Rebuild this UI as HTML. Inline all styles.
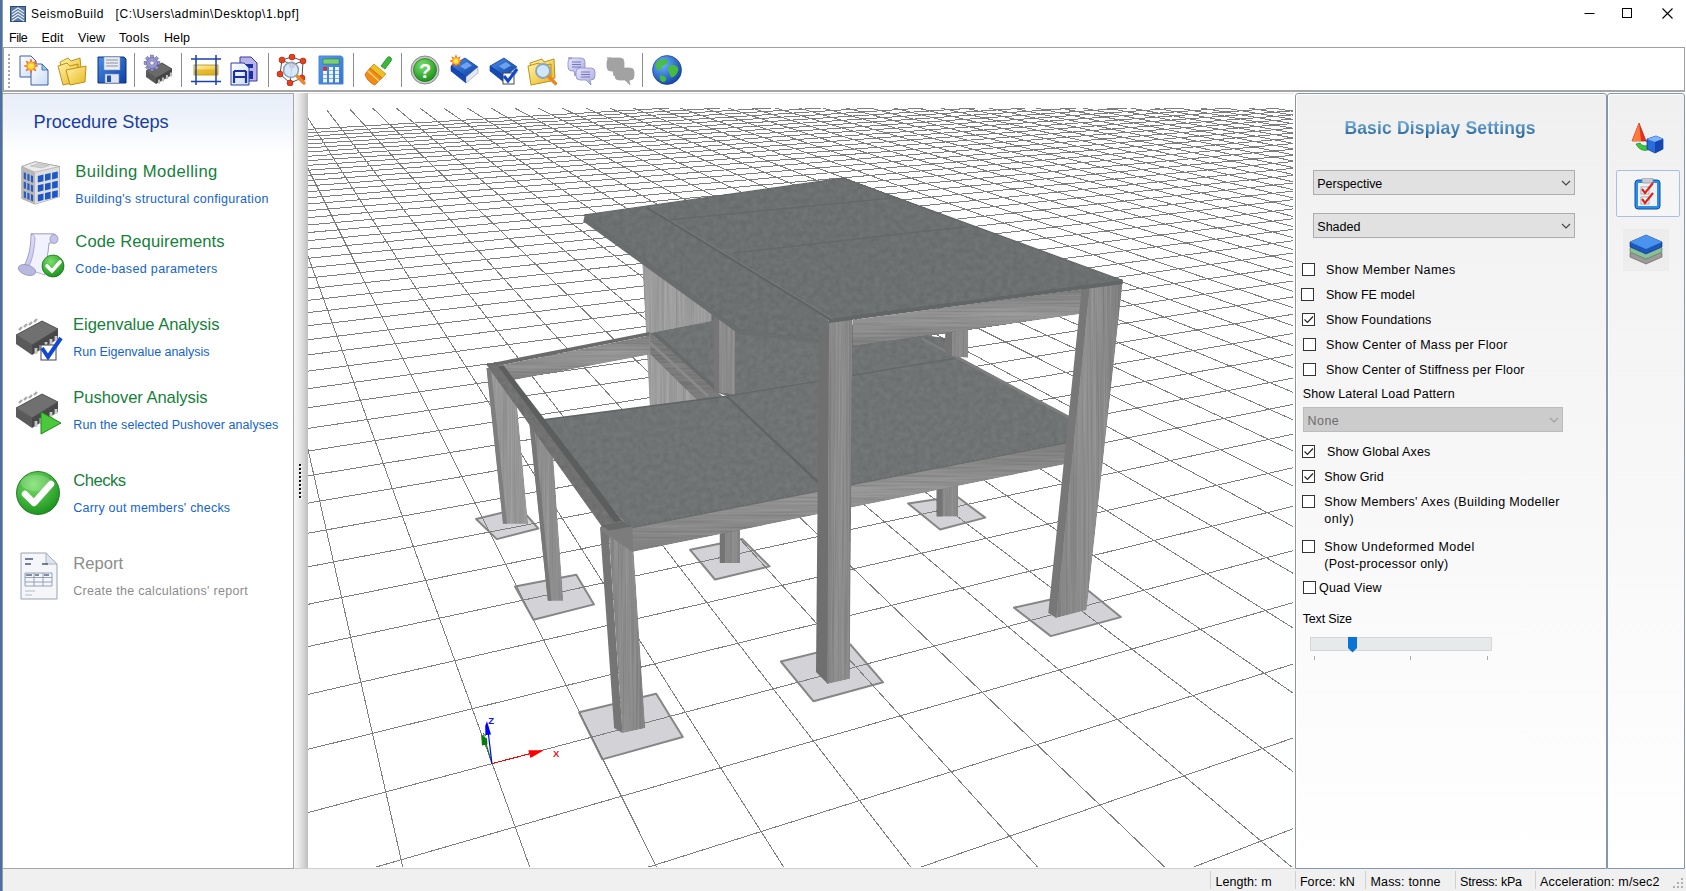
<!DOCTYPE html>
<html><head><meta charset="utf-8"><title>SeismoBuild</title>
<style>
*{box-sizing:border-box;margin:0;padding:0}
html,body{width:1686px;height:891px;overflow:hidden;background:#fff;font-family:"Liberation Sans","DejaVu Sans",sans-serif;font-size:12px;color:#000}
.abs{position:absolute}
#win{position:absolute;left:0;top:0;width:1686px;height:891px;background:#fff;overflow:hidden}
#lb{position:absolute;left:0;top:0;width:2px;height:891px;background:#4a70a6}
#lb2{position:absolute;left:2px;top:0;width:1px;height:891px;background:#9a9a9a}
.t{position:absolute;white-space:pre}
.title{font-size:12px}
.rt{font-size:17.5px;font-weight:bold;color:#4c8abc;background:linear-gradient(180deg,#86b6dc 10%,#4c8abc 50%,#245f92 90%);-webkit-background-clip:text;background-clip:text;-webkit-text-fill-color:transparent}
.menu{font-size:12.5px}
#tb{position:absolute;left:3px;top:47px;width:1682px;height:45px;border:1px solid #a0a0a0;border-bottom:2px solid #a6a6a6;background:#fff}
.sep{position:absolute;top:53px;width:1px;height:34px;background:#8c8c8c}
#lp{position:absolute;left:3px;top:93px;width:291px;height:776px;border:1px solid #a8a8a8;border-left:none;background:#fff;overflow:hidden}
#lpg{position:absolute;left:0;top:0;width:290px;height:60px;background:linear-gradient(180deg,#e8eff9 0%,#eef3fb 40%,#f8fafd 75%,#ffffff 100%)}
#spl{position:absolute;left:294px;top:93px;width:14px;height:775px;background:linear-gradient(90deg,#f6f6f6 0%,#ececec 30%,#d4d4d4 70%,#bdbdbd 100%)}
#vp{position:absolute;left:308px;top:93px;width:986px;height:775px;background:#fff;overflow:hidden;box-shadow:inset 0 1px 0 #e6e6e6}
#rp{position:absolute;left:1295px;top:93px;width:1312px;height:776px}
.h1{font-size:18.2px;color:#1a3c9c}
.st{font-size:16.6px;color:#15803a}
.ss{font-size:12.5px;color:#1463cf}
.cb{position:absolute;width:13px;height:13px;border:1px solid #333;background:#fff}
.lbl{font-size:12.5px}
.sel{position:absolute;height:25px;border:1px solid #adadad;background:#e1e1e1}
.stat{font-size:12.5px}
.ssep{position:absolute;top:871px;width:1px;height:18px;background:#d0d0d0}
</style></head><body><div id="win">
<div id="lb"></div><div id="lb2"></div><svg class="abs" style="left:10px;top:6px" width="16" height="16" viewBox="0 0 16 16"><rect x="0.500" y="0.500" width="15" height="15" fill="#5a7aa6" stroke="#2c4a78"/><path d="M2 6l6-4 6 4M2 9l6-4 6 4M2 12l6-4 6 4M2 15l6-4 6 4" stroke="#e8eef8" stroke-width="1.300" fill="none"/></svg><div class="t title" style="left:31.0px;top:6.7px;letter-spacing:0.565px;">SeismoBuild   [C:\Users\admin\Desktop\1.bpf]</div><svg class="abs" style="left:1580px;top:4px" width="100" height="20" viewBox="0 0 100 20"><path d="M4.500 9.500h10" stroke="#000" stroke-width="1"/><rect x="42.500" y="4.500" width="9" height="9" fill="none" stroke="#000" stroke-width="1"/><path d="M82.500 4.500l10 10M92.500 4.500l-10 10" stroke="#000" stroke-width="1.100"/></svg><div class="t menu" style="left:9.0px;top:30.8px;letter-spacing:-0.469px;">File</div><div class="t menu" style="left:41.5px;top:30.8px;letter-spacing:0.127px;">Edit</div><div class="t menu" style="left:78.0px;top:30.8px;letter-spacing:0.036px;">View</div><div class="t menu" style="left:119.0px;top:30.8px;letter-spacing:0.290px;">Tools</div><div class="t menu" style="left:164.0px;top:30.8px;letter-spacing:0.081px;">Help</div><div id="tb"></div><div class="abs" style="left:8px;top:54px;width:2px;height:34px;background:repeating-linear-gradient(180deg,#a8a8a8 0,#a8a8a8 2px,transparent 2px,transparent 4px)"></div><div class="sep" style="left:134px"></div><div class="sep" style="left:181px"></div><div class="sep" style="left:268px"></div><div class="sep" style="left:353px"></div><div class="sep" style="left:401px"></div><div class="sep" style="left:642px"></div><svg class="abs" width="0" height="0"><defs>
<linearGradient id="gY" x1="0" y1="0" x2="1" y2="1"><stop offset="0" stop-color="#fff3a8"/><stop offset="1" stop-color="#e8b820"/></linearGradient>
<linearGradient id="gB" x1="0" y1="0" x2="1" y2="1"><stop offset="0" stop-color="#4a8ee6"/><stop offset="1" stop-color="#0c3fa8"/></linearGradient>
<linearGradient id="gD" x1="0" y1="0" x2="1" y2="1"><stop offset="0" stop-color="#ffffff"/><stop offset="1" stop-color="#c9dcf4"/></linearGradient>
<linearGradient id="gK" x1="0" y1="0" x2="0" y2="1"><stop offset="0" stop-color="#8a8a8a"/><stop offset="1" stop-color="#3c3c3c"/></linearGradient>
<radialGradient id="gG" cx="0.4" cy="0.3" r="0.8"><stop offset="0" stop-color="#7be06a"/><stop offset="1" stop-color="#0f8a14"/></radialGradient>
<radialGradient id="gS" cx="0.5" cy="0.5" r="0.5"><stop offset="0" stop-color="#fff36a"/><stop offset="0.45" stop-color="#ffb020"/><stop offset="1" stop-color="#e8201a"/></radialGradient>
<radialGradient id="gE" cx="0.35" cy="0.3" r="0.8"><stop offset="0" stop-color="#6ab4ff"/><stop offset="1" stop-color="#0b3ea0"/></radialGradient>
<linearGradient id="gL" x1="0" y1="0" x2="1" y2="1"><stop offset="0" stop-color="#e6e6ff"/><stop offset="1" stop-color="#a9a9e0"/></linearGradient>
</defs></svg><svg class="abs" style="left:18px;top:54px" width="32" height="32" viewBox="0 0 32 32"><path d="M2 2h11l5 5v16H2z" fill="url(#gD)" stroke="#3c5fa8"/><path d="M13 10h11l6 6v15H13z" fill="url(#gD)" stroke="#3c5fa8"/><path d="M24 10v6h6z" fill="#9cc4f0" stroke="#3c5fa8" stroke-width="0.8"/><polygon points="20.5,12.0 16.8,13.6 18.3,17.3 14.6,15.8 13.0,19.5 11.4,15.8 7.7,17.3 9.2,13.6 5.5,12.0 9.2,10.4 7.7,6.7 11.4,8.2 13.0,4.5 14.6,8.2 18.3,6.7 16.8,10.4" fill="url(#gS)"/><circle cx="13" cy="12" r="2.625" fill="#ffe94a"/></svg><svg class="abs" style="left:57px;top:54px" width="32" height="32" viewBox="0 0 32 32"><path d="M3 8l8-4 3 3 9-3 2 20-18 5z" fill="url(#gY)" stroke="#b8860b" stroke-width="0.9"/><path d="M1 12l9-3 3 3 8-2-1 18-14 3z" fill="url(#gY)" stroke="#b8860b" stroke-width="0.9"/><path d="M9 16l20-4-1 16-15 3z" fill="url(#gY)" stroke="#b8860b" stroke-width="0.9"/></svg><svg class="abs" style="left:96px;top:54px" width="32" height="32" viewBox="0 0 32 32"><path d="M2 3h26l2 2v24H2z" fill="url(#gB)" stroke="#0a2f86"/><rect x="8" y="3" width="16" height="13" fill="#e9edf2" stroke="#8898b0" stroke-width="0.6"/><path d="M10 6h12M10 9h12M10 12h12" stroke="#a8b0bc" stroke-width="1.4"/><rect x="9" y="20" width="14" height="9" fill="#dfe5ee" stroke="#7788a0" stroke-width="0.6"/><rect x="11" y="21.5" width="4" height="6.5" fill="#1a50b8"/></svg><svg class="abs" style="left:142px;top:54px" width="32" height="32" viewBox="0 0 32 32"><g transform="translate(2,1)"><path d="M2 16l16-8 10 6-16 9z" fill="#6a6a6a" stroke="#3a3a3a" stroke-width="0.8"/><path d="M2 16v6l10 7v-6z" fill="#585858"/><path d="M12 23v6l16-9v-6z" fill="#444"/><path d="M15 24.5v4M19 22.5v4M23 20v4M27 17.500v4" stroke="#bdbdbd" stroke-width="2.2"/></g><rect x="-1.6" y="-7.9" width="3.2" height="4.0" fill="#9a9ad0" stroke="#5c5c98" stroke-width="0.5" transform="translate(10,9) rotate(0)"/><rect x="-1.6" y="-7.9" width="3.2" height="4.0" fill="#9a9ad0" stroke="#5c5c98" stroke-width="0.5" transform="translate(10,9) rotate(45)"/><rect x="-1.6" y="-7.9" width="3.2" height="4.0" fill="#9a9ad0" stroke="#5c5c98" stroke-width="0.5" transform="translate(10,9) rotate(90)"/><rect x="-1.6" y="-7.9" width="3.2" height="4.0" fill="#9a9ad0" stroke="#5c5c98" stroke-width="0.5" transform="translate(10,9) rotate(135)"/><rect x="-1.6" y="-7.9" width="3.2" height="4.0" fill="#9a9ad0" stroke="#5c5c98" stroke-width="0.5" transform="translate(10,9) rotate(180)"/><rect x="-1.6" y="-7.9" width="3.2" height="4.0" fill="#9a9ad0" stroke="#5c5c98" stroke-width="0.5" transform="translate(10,9) rotate(225)"/><rect x="-1.6" y="-7.9" width="3.2" height="4.0" fill="#9a9ad0" stroke="#5c5c98" stroke-width="0.5" transform="translate(10,9) rotate(270)"/><rect x="-1.6" y="-7.9" width="3.2" height="4.0" fill="#9a9ad0" stroke="#5c5c98" stroke-width="0.5" transform="translate(10,9) rotate(315)"/><circle cx="10" cy="9" r="5.5" fill="#9a9ad0" stroke="#5c5c98" stroke-width="0.6"/><circle cx="10" cy="9" r="2.09" fill="#f4f4ff" stroke="#5c5c98" stroke-width="0.5"/></svg><svg class="abs" style="left:190px;top:54px" width="32" height="32" viewBox="0 0 32 32"><rect x="4" y="11" width="24" height="10" fill="url(#gY)" stroke="#a67c00" stroke-width="0.7"/><rect x="4" y="15.5" width="24" height="5.5" fill="#d9a400" opacity="0.55"/><path d="M1 5h30M1 27.500h30M6 1v30M26 1v30" stroke="#1a3fb0" stroke-width="1.500"/></svg><svg class="abs" style="left:229px;top:54px" width="32" height="32" viewBox="0 0 32 32"><path d="M11 3h11l6 6v18H11z" fill="#b9b4e8" stroke="#3a3a9a"/><path d="M14 10h10v4H14zM14 17h10v8H14z" fill="#1c2fa8"/><path d="M2 9h13l5 5v17H2z" fill="url(#gD)" stroke="#2a3fa0"/><path d="M5 17h12M5 23h12M5 17v12M17 17v12" stroke="#1c2fa8" stroke-width="2.2" fill="none"/></svg><svg class="abs" style="left:276px;top:54px" width="32" height="32" viewBox="0 0 32 32"><path d="M6 6L16 3L27 7L26 24L14 29L4 20zM6 6L16 11L27 7M16 11L14 29" stroke="#555" stroke-width="1" fill="none"/><circle cx="6" cy="6" r="3" fill="#e8401c" stroke="#a01808" stroke-width="0.6"/><circle cx="16" cy="3" r="3" fill="#e8401c" stroke="#a01808" stroke-width="0.6"/><circle cx="27" cy="7" r="3" fill="#e8401c" stroke="#a01808" stroke-width="0.6"/><circle cx="4" cy="20" r="3" fill="#e8401c" stroke="#a01808" stroke-width="0.6"/><circle cx="14" cy="29" r="3" fill="#e8401c" stroke="#a01808" stroke-width="0.6"/><circle cx="26" cy="24" r="3" fill="#e8401c" stroke="#a01808" stroke-width="0.6"/><circle cx="16" cy="11" r="3" fill="#e8401c" stroke="#a01808" stroke-width="0.6"/><circle cx="15" cy="16" r="7.5" fill="#cfe6fb" fill-opacity="0.85" stroke="#8aa4c0" stroke-width="1.6"/><path d="M21 22l7 7" stroke="#e88a2a" stroke-width="3.4" stroke-linecap="round"/></svg><svg class="abs" style="left:315px;top:54px" width="32" height="32" viewBox="0 0 32 32"><path d="M4 2h22l2 2v26H4z" fill="url(#gB)" stroke="#2a64c0" stroke-width="0.8"/><rect x="4" y="2" width="24" height="28" fill="#5aa2f0" opacity="0.55"/><rect x="8" y="5" width="16" height="5" fill="#7cd070" stroke="#2a7a2a" stroke-width="0.5"/><rect x="8" y="13" width="4" height="3.4" fill="#e03020"/><rect x="14" y="13" width="4" height="3.4" fill="#eef4ff"/><rect x="20" y="13" width="4" height="3.4" fill="#eef4ff"/><rect x="8" y="17" width="4" height="3.4" fill="#eef4ff"/><rect x="14" y="17" width="4" height="3.4" fill="#eef4ff"/><rect x="20" y="17" width="4" height="3.4" fill="#eef4ff"/><rect x="8" y="21" width="4" height="3.4" fill="#eef4ff"/><rect x="14" y="21" width="4" height="3.4" fill="#eef4ff"/><rect x="20" y="21" width="4" height="3.4" fill="#eef4ff"/><rect x="8" y="25" width="4" height="3.4" fill="#eef4ff"/><rect x="14" y="25" width="4" height="3.4" fill="#eef4ff"/><rect x="20" y="25" width="4" height="3.4" fill="#eef4ff"/></svg><svg class="abs" style="left:362px;top:54px" width="32" height="32" viewBox="0 0 32 32"><path d="M19 12l6-8c2-3 6 0 4 3l-6 8z" fill="#3cb83c" stroke="#187818" stroke-width="0.7"/><path d="M12 10l12 10-4 4L8 14z" fill="#f0c020" stroke="#a87800" stroke-width="0.6"/><path d="M8 14l12 10-7 7C9 30 3 24 3 20z" fill="#f08a18" stroke="#b85c00" stroke-width="0.6"/><path d="M6 17l11 10" stroke="#ffd860" stroke-width="1.6"/></svg><svg class="abs" style="left:409px;top:54px" width="32" height="32" viewBox="0 0 32 32"><circle cx="16" cy="16" r="14" fill="#c8c8c8" stroke="#8a8a8a"/><circle cx="16" cy="16" r="11.5" fill="url(#gG)" stroke="#0c6c10" stroke-width="0.6"/><text x="16" y="23.5" text-anchor="middle" font-family="Liberation Sans,sans-serif" font-weight="bold" font-size="20" fill="#fff">?</text></svg><svg class="abs" style="left:448px;top:54px" width="32" height="32" viewBox="0 0 32 32"><path d="M3 12l14-8 13 9-12 10z" fill="url(#gB)" stroke="#0a2f86" stroke-width="0.7"/><path d="M3 12v5l15 12v-6z" fill="#1248b8" stroke="#0a2f86" stroke-width="0.6"/><path d="M18 23v6l12-10v-6z" fill="#e4e8f0" stroke="#8088a0" stroke-width="0.5"/><path d="M12 12l7-4 5 3.500-7 4z" fill="#7eb0f4" opacity="0.8"/><polygon points="14.5,7.0 11.3,8.4 12.6,11.6 9.4,10.3 8.0,13.5 6.6,10.3 3.4,11.6 4.7,8.4 1.5,7.0 4.7,5.6 3.4,2.4 6.6,3.7 8.0,0.5 9.4,3.7 12.6,2.4 11.3,5.6" fill="url(#gS)"/><circle cx="8" cy="7" r="2.275" fill="#ffe94a"/></svg><svg class="abs" style="left:487px;top:54px" width="32" height="32" viewBox="0 0 32 32"><path d="M3 12l14-8 13 9-12 10z" fill="url(#gB)" stroke="#0a2f86" stroke-width="0.7"/><path d="M3 12v5l15 12v-6z" fill="#1248b8" stroke="#0a2f86" stroke-width="0.6"/><path d="M18 23v6l12-10v-6z" fill="#e4e8f0" stroke="#8088a0" stroke-width="0.5"/><path d="M12 12l7-4 5 3.500-7 4z" fill="#7eb0f4" opacity="0.8"/><rect x="16" y="19" width="11" height="11" fill="#fff" stroke="#444" stroke-width="1"/><path d="M17 22l4 5 9-12" stroke="#1248d0" stroke-width="3" fill="none"/></svg><svg class="abs" style="left:526px;top:54px" width="32" height="32" viewBox="0 0 32 32"><path d="M4 9l12-4 2 3 10-3 1 19-20 5z" fill="url(#gY)" stroke="#b8860b" stroke-width="0.9"/><path d="M2 12l11-3 3 3 9-2v17l-20 4z" fill="url(#gY)" stroke="#b8860b" stroke-width="0.9"/><circle cx="17" cy="17" r="7" fill="#cfe6fb" stroke="#8aa4c0" stroke-width="1.8"/><path d="M22.500 22.500l7 7" stroke="#e8862a" stroke-width="3.4" stroke-linecap="round"/></svg><svg class="abs" style="left:565px;top:54px" width="32" height="32" viewBox="0 0 32 32"><path d="M3 4h13a4 4 0 0 1 4 4v5a4 4 0 0 1-4 4h-4l-2 5-1-5H7a4 4 0 0 1-4-4V8a4 4 0 0 1 4-4z" fill="url(#gL)" stroke="#8c8cc8" stroke-width="0.8"/><path d="M15 14h11a4 4 0 0 1 4 4v4a4 4 0 0 1-4 4h-1l1 5-5-5h-6a4 4 0 0 1-4-4v-4a4 4 0 0 1 4-4z" fill="url(#gL)" stroke="#8c8cc8" stroke-width="0.8"/><path d="M7 8h9M7 10.500h9M7 13h9M16 18h9M16 20.500h9M16 23h9" stroke="#7878b8" stroke-width="1"/></svg><svg class="abs" style="left:604px;top:54px" width="32" height="32" viewBox="0 0 32 32"><path d="M3 4h13a4 4 0 0 1 4 4v5a4 4 0 0 1-4 4h-4l-2 5-1-5H7a4 4 0 0 1-4-4V8a4 4 0 0 1 4-4z" fill="#a2a2a2" stroke="#a2a2a2" stroke-width="0.8"/><path d="M15 14h11a4 4 0 0 1 4 4v4a4 4 0 0 1-4 4h-1l1 5-5-5h-6a4 4 0 0 1-4-4v-4a4 4 0 0 1 4-4z" fill="#a2a2a2" stroke="#a2a2a2" stroke-width="0.8"/><path d="M7 8h9M7 10.500h9M7 13h9M16 18h9M16 20.500h9M16 23h9" stroke="#a2a2a2" stroke-width="1"/></svg><svg class="abs" style="left:651px;top:54px" width="32" height="32" viewBox="0 0 32 32"><circle cx="16" cy="16" r="14.500" fill="url(#gE)" stroke="#0a2f86" stroke-width="0.6"/><path d="M6 8c3-3 8-4 10-2s0 4-3 5-2 5-5 5-4-5-2-8zM18 12c3-2 8-1 9 2s-2 8-5 9-3-3-4-5 -2-4 0-6zM9 22c2-1 5 0 6 2s-1 4-3 4-4-4-3-6z" fill="#48c038" opacity="0.95"/></svg><div id="lp"><div id="lpg"></div><svg class="abs" style="left:16.2px;top:65.2px" width="43.3" height="47" viewBox="0 0 46 50"><path d="M3 8l14-5 26 5v32l-26 8-14-6z" fill="#dcdcdc" stroke="#8a8a8a" stroke-width="0.8"/><path d="M3 8l14 6v34l-14-6z" fill="#b8b8b8"/><path d="M17 14l26-6v32l-26 8z" fill="#dedede"/><path d="M3 8l14-5 26 5-26 6z" fill="#ececec" stroke="#9a9a9a" stroke-width="0.6"/><path d="M12 7.500l8-2.500 12 2-8 2.500z" fill="#d0d0d0" stroke="#aaa" stroke-width="0.500"/><path d="M20.0 18.0l6-1.400v7l-6 1.500z" fill="#1c56c8"/><path d="M27.6 16.3l6-1.400v7l-6 1.500z" fill="#1c56c8"/><path d="M35.2 14.6l6-1.400v7l-6 1.500z" fill="#1c56c8"/><path d="M5.0 14.0l2.400 1v7l-2.400-1z" fill="#2a5cc0"/><path d="M8.8 15.6l2.400 1v7l-2.400-1z" fill="#2a5cc0"/><path d="M12.6 17.2l2.400 1v7l-2.400-1z" fill="#2a5cc0"/><path d="M20.0 28.0l6-1.400v7l-6 1.500z" fill="#1c56c8"/><path d="M27.6 26.3l6-1.400v7l-6 1.500z" fill="#1c56c8"/><path d="M35.2 24.6l6-1.400v7l-6 1.500z" fill="#1c56c8"/><path d="M5.0 24.0l2.400 1v7l-2.400-1z" fill="#2a5cc0"/><path d="M8.8 25.6l2.400 1v7l-2.400-1z" fill="#2a5cc0"/><path d="M12.6 27.2l2.400 1v7l-2.400-1z" fill="#2a5cc0"/><path d="M20.0 38.0l6-1.400v7l-6 1.500z" fill="#1c56c8"/><path d="M27.6 36.3l6-1.400v7l-6 1.500z" fill="#1c56c8"/><path d="M35.2 34.6l6-1.400v7l-6 1.500z" fill="#1c56c8"/><path d="M5.0 34.0l2.400 1v7l-2.400-1z" fill="#2a5cc0"/><path d="M8.8 35.6l2.400 1v7l-2.400-1z" fill="#2a5cc0"/><path d="M12.6 37.2l2.400 1v7l-2.400-1z" fill="#2a5cc0"/></svg><svg class="abs" style="left:14px;top:136px" width="50" height="50" viewBox="0 0 50 50"><path d="M14 4h22c4 0 5 5 2 8l-6 1-4 30-22-6c6-8 8-22 8-33z" fill="url(#gL)" stroke="#8a8ab8" stroke-width="0.8"/><path d="M14 4c2 0 4 2 4 5-1 12-3 24-8 30l18 6 4-32 6-1c3-3 2-8-2-8z" fill="#f2f2ff" stroke="#8a8ab8" stroke-width="0.6"/><ellipse cx="37" cy="9" rx="4" ry="4.500" fill="#c4c4ea" stroke="#8a8ab8" stroke-width="0.7"/><ellipse cx="10" cy="40" rx="9" ry="5" transform="rotate(18 10 40)" fill="#b8b8e0" stroke="#8a8ab8" stroke-width="0.7"/><circle cx="36" cy="36" r="11" fill="url(#gG)" stroke="#0c6c10" stroke-width="0.7"/><path d="M30 36l5 5 8-9" stroke="#fff" stroke-width="3.6" fill="none" stroke-linecap="round"/></svg><svg class="abs" style="left:11px;top:221px" width="50" height="48" viewBox="0 0 50 48"><path d="M2 20l26-14 16 8-26 16z" fill="#707070" stroke="#3a3a3a" stroke-width="0.8"/><path d="M2 20v9l16 11v-10z" fill="#5a5a5a"/><path d="M18 30v10l26-16v-10z" fill="#484848"/><path d="M22 33v6M27 30v6M32 27v6M37 24v6M42 21v5" stroke="#c8c8c8" stroke-width="2.800"/><path d="M8 12l-3 3M13 9l-3 3M18 7l-3 3M23 4l-3 3" stroke="#aaa" stroke-width="2.400"/><rect x="27" y="30" width="15" height="15" fill="#fff" stroke="#444"/><path d="M28 33l6 9 13-19" stroke="#1248d0" stroke-width="4" fill="none"/></svg><svg class="abs" style="left:11px;top:294px" width="50" height="48" viewBox="0 0 50 48"><path d="M2 20l26-14 16 8-26 16z" fill="#707070" stroke="#3a3a3a" stroke-width="0.8"/><path d="M2 20v9l16 11v-10z" fill="#5a5a5a"/><path d="M18 30v10l26-16v-10z" fill="#484848"/><path d="M22 33v6M27 30v6M32 27v6M37 24v6M42 21v5" stroke="#c8c8c8" stroke-width="2.800"/><path d="M8 12l-3 3M13 9l-3 3M18 7l-3 3M23 4l-3 3" stroke="#aaa" stroke-width="2.400"/><path d="M27 24l20 11-20 11z" fill="#4cc83c" stroke="#1c8a1c" stroke-width="1"/></svg><svg class="abs" style="left:13px;top:377px" width="45" height="45" viewBox="0 0 45 45"><circle cx="22" cy="22" r="21.500" fill="url(#gG)" stroke="#0c6c10" stroke-width="0.8"/><ellipse cx="20" cy="12" rx="15" ry="8" fill="#fff" opacity="0.18"/><path d="M9 23l9 9 17-19" stroke="#fff" stroke-width="6.500" fill="none" stroke-linecap="round" stroke-linejoin="round"/></svg><svg class="abs" style="left:17px;top:458px" width="39" height="49" viewBox="0 0 39 49"><path d="M1 1h25l11 11v35H1z" fill="#f4f6fa" stroke="#9aa4b4"/><path d="M26 1v11h11z" fill="#dfe5ee" stroke="#9aa4b4" stroke-width="0.8"/><path d="M5 7h8M5 12h6M22 12h6" stroke="#4a5a78" stroke-width="1.600"/><path d="M5 21h27v13H5zM5 25.500h27M5 30h27M14 21v13M23 21v13" fill="none" stroke="#8a98b0" stroke-width="0.9"/><path d="M6 23h6M15 23h4M24 23h5" stroke="#5a6a88" stroke-width="1.400"/><path d="M5 39h10M5 43h7" stroke="#b0b8c8" stroke-width="1"/></svg></div><div class="t h1" style="left:33.6px;top:111.5px;letter-spacing:-0.026px;">Procedure Steps</div><div class="t st" style="left:75.3px;top:161.5px;letter-spacing:0.430px;">Building Modelling</div><div class="t ss" style="left:75.3px;top:192px;letter-spacing:0.294px;">Building's structural configuration</div><div class="t st" style="left:75.3px;top:231.5px;letter-spacing:0.110px;">Code Requirements</div><div class="t ss" style="left:75.3px;top:262px;letter-spacing:0.361px;">Code-based parameters</div><div class="t st" style="left:73.0px;top:314.5px;letter-spacing:-0.060px;">Eigenvalue Analysis</div><div class="t ss" style="left:73.3px;top:345px;letter-spacing:-0.035px;">Run Eigenvalue analysis</div><div class="t st" style="left:73.3px;top:387.5px;letter-spacing:-0.078px;">Pushover Analysis</div><div class="t ss" style="left:73.3px;top:418px;letter-spacing:0.065px;">Run the selected Pushover analyses</div><div class="t st" style="left:73.3px;top:470.5px;letter-spacing:-0.534px;">Checks</div><div class="t ss" style="left:73.3px;top:501px;letter-spacing:0.211px;">Carry out members' checks</div><div class="t st" style="left:73.3px;top:553.5px;letter-spacing:0.015px;color:#8c8c8c;">Report</div><div class="t ss" style="left:73.3px;top:584px;letter-spacing:0.289px;color:#8c8c8c;">Create the calculations' report</div><div id="spl"></div><div class="abs" style="left:300px;top:465px;width:2px;height:2px;background:#fff"></div><div class="abs" style="left:299px;top:464px;width:2px;height:2px;background:#111"></div><div class="abs" style="left:300px;top:469px;width:2px;height:2px;background:#fff"></div><div class="abs" style="left:299px;top:468px;width:2px;height:2px;background:#111"></div><div class="abs" style="left:300px;top:473px;width:2px;height:2px;background:#fff"></div><div class="abs" style="left:299px;top:472px;width:2px;height:2px;background:#111"></div><div class="abs" style="left:300px;top:477px;width:2px;height:2px;background:#fff"></div><div class="abs" style="left:299px;top:476px;width:2px;height:2px;background:#111"></div><div class="abs" style="left:300px;top:481px;width:2px;height:2px;background:#fff"></div><div class="abs" style="left:299px;top:480px;width:2px;height:2px;background:#111"></div><div class="abs" style="left:300px;top:485px;width:2px;height:2px;background:#fff"></div><div class="abs" style="left:299px;top:484px;width:2px;height:2px;background:#111"></div><div class="abs" style="left:300px;top:489px;width:2px;height:2px;background:#fff"></div><div class="abs" style="left:299px;top:488px;width:2px;height:2px;background:#111"></div><div class="abs" style="left:300px;top:493px;width:2px;height:2px;background:#fff"></div><div class="abs" style="left:299px;top:492px;width:2px;height:2px;background:#111"></div><div class="abs" style="left:300px;top:497px;width:2px;height:2px;background:#fff"></div><div class="abs" style="left:299px;top:496px;width:2px;height:2px;background:#111"></div><div id="vp"><svg width="986" height="775" viewBox="0 0 986 775" style="position:absolute;left:0;top:0">
<defs><clipPath id="vc"><rect x="0" y="15" width="985" height="759"/></clipPath>
<linearGradient id="colF" x1="0" x2="1" y1="0" y2="0"><stop offset="0" stop-color="#848484"/><stop offset="0.5" stop-color="#8e8e8e"/><stop offset="1" stop-color="#828282"/></linearGradient>
<linearGradient id="wallG" x1="0" x2="1" y1="0" y2="0"><stop offset="0" stop-color="#8c8c8c"/><stop offset="0.15" stop-color="#a4a4a4"/><stop offset="0.3" stop-color="#909090"/><stop offset="0.45" stop-color="#a6a6a6"/><stop offset="0.6" stop-color="#949494"/><stop offset="0.8" stop-color="#a2a2a2"/><stop offset="1" stop-color="#909090"/></linearGradient>
<linearGradient id="beamG" x1="0" x2="0" y1="0" y2="1"><stop offset="0" stop-color="#7c7c7c"/><stop offset="0.45" stop-color="#949494"/><stop offset="1" stop-color="#808080"/></linearGradient>
<filter id="fv" x="-2%" y="-2%" width="104%" height="104%" color-interpolation-filters="sRGB"><feTurbulence type="fractalNoise" baseFrequency="0.6 0.008" numOctaves="2" seed="4" result="n"/><feColorMatrix in="n" type="matrix" values="1 0 0 0 0 1 0 0 0 0 1 0 0 0 0 0 0 0 0 1" result="g"/><feComposite in="SourceGraphic" in2="g" operator="arithmetic" k1="0" k2="1" k3="0.15" k4="-0.075" result="c"/><feComposite in="c" in2="SourceGraphic" operator="in"/></filter>
<filter id="fh" x="-2%" y="-2%" width="104%" height="104%" color-interpolation-filters="sRGB"><feTurbulence type="fractalNoise" baseFrequency="0.012 0.5" numOctaves="2" seed="7" result="n"/><feColorMatrix in="n" type="matrix" values="1 0 0 0 0 1 0 0 0 0 1 0 0 0 0 0 0 0 0 1" result="g"/><feComposite in="SourceGraphic" in2="g" operator="arithmetic" k1="0" k2="1" k3="0.14" k4="-0.07" result="c"/><feComposite in="c" in2="SourceGraphic" operator="in"/></filter>
<filter id="fs" x="-2%" y="-2%" width="104%" height="104%" color-interpolation-filters="sRGB"><feTurbulence type="fractalNoise" baseFrequency="0.18 0.18" numOctaves="2" seed="11" result="n"/><feColorMatrix in="n" type="matrix" values="1 0 0 0 0 1 0 0 0 0 1 0 0 0 0 0 0 0 0 1" result="g"/><feComposite in="SourceGraphic" in2="g" operator="arithmetic" k1="0" k2="1" k3="0.07" k4="-0.035" result="c"/><feComposite in="c" in2="SourceGraphic" operator="in"/></filter>
</defs>
<g clip-path="url(#vc)">
<polygon points="168.1,426.0 212.5,415.3 230.3,435.5 188.8,446.1" fill="#d3d3d7" stroke="#868686" stroke-width="2" stroke-linejoin="round"/>
<polygon points="207.0,493.6 268.3,481.7 286.0,511.4 225.5,526.8" fill="#d3d3d7" stroke="#868686" stroke-width="2" stroke-linejoin="round"/>
<polygon points="271.1,619.3 348.2,600.7 374.8,644.0 294.3,666.4" fill="#d3d3d7" stroke="#868686" stroke-width="2" stroke-linejoin="round"/>
<polygon points="382.1,456.8 434.3,446.1 461.6,473.4 407.0,486.5" fill="#d3d3d7" stroke="#868686" stroke-width="2" stroke-linejoin="round"/>
<polygon points="472.8,568.5 542.3,551.4 575.1,589.3 505.5,608.3" fill="#d3d3d7" stroke="#868686" stroke-width="2" stroke-linejoin="round"/>
<polygon points="600.1,410.4 648.7,403.3 677.2,424.6 632.1,436.5" fill="#d3d3d7" stroke="#868686" stroke-width="2" stroke-linejoin="round"/>
<polygon points="706.0,514.6 780.8,498.0 812.8,524.1 742.8,543.1" fill="#d3d3d7" stroke="#868686" stroke-width="2" stroke-linejoin="round"/>
<path d="M-28356.4 22081.7L2814.7 184.7M-9859.0 7513.5L2731.1 174.9M-6003.4 4476.8L2652.1 165.6M-4334.3 3162.3L2577.4 156.9M-3402.6 2428.6L2506.7 148.6M-2808.1 1960.3L2439.5 140.7M-2395.8 1635.6L2375.7 133.2M-2093.1 1397.2L2315.0 126.1M-1861.3 1214.6L2257.2 119.3M-1678.2 1070.4L2202.1 112.9M-1529.9 953.6L2149.4 106.7M-1407.3 857.1L2099.2 100.8M-1304.3 776.0L2051.0 95.1M-1216.6 706.9L2005.0 89.7M-1140.9 647.2L1960.8 84.6M-1074.9 595.3L1918.5 79.6M-1017.0 549.7L1877.8 74.8M-965.6 509.2L1838.8 70.3M-919.8 473.1L1801.2 65.8M-878.7 440.8L1765.1 61.6M-841.6 411.5L1730.3 57.5M-808.0 385.0L1696.7 53.6M-777.3 360.9L1664.4 49.8M-749.2 338.8L1633.1 46.1M-723.4 318.5L1603.0 42.6M-699.7 299.8L1573.9 39.2M-677.7 282.5L1545.7 35.9M-657.4 266.4L1518.5 32.7M-638.4 251.5L1492.2 29.6M-620.8 237.6L1466.6 26.6M-604.3 224.6L1441.9 23.7M-588.8 212.4L1418.0 20.9M-574.3 201.0L1394.7 18.2M-560.7 190.3L1372.2 15.5M-547.8 180.2L1350.3 13.0M-535.7 170.6L1329.1 10.5M-524.2 161.6L1308.4 8.1M-513.4 153.0L1288.4 5.7M-503.1 144.9L1268.9 3.4M-493.3 137.2L1249.9 1.2M-484.0 129.9L1231.4 -1.0M-475.2 123.0L1213.5 -3.1M-466.8 116.3L1196.0 -5.1M-458.7 110.0L1179.0 -7.1M-451.1 104.0L1162.4 -9.1M-443.7 98.2L1146.2 -11.0M-436.7 92.7L1130.4 -12.8M-430.0 87.4L1115.0 -14.6M-423.5 82.3L1100.0 -16.4M-417.4 77.4L1085.3 -18.1M-411.4 72.7L1071.0 -19.8M-405.7 68.2L1057.1 -21.4M-400.2 63.9L1043.4 -23.0M-394.9 59.7L1030.1 -24.6M-28356.4 22081.7L-366.9 37.7M-13495.9 11642.5L-338.4 36.1M-8129.4 7872.7L-310.3 34.6M-5361.3 5928.2L-282.7 33.2M-3672.3 4741.7L-255.5 31.7M-2534.3 3942.3L-228.7 30.3M-1715.5 3367.1L-202.3 28.8M-1098.1 2933.4L-176.2 27.5M-616.0 2594.7L-150.6 26.1M-229.0 2322.8L-125.3 24.7M88.4 2099.9L-100.5 23.4M353.5 1913.6L-75.9 22.1M578.2 1755.8L-51.7 20.8M771.1 1620.3L-27.9 19.5M938.5 1502.7L-4.4 18.2M1085.2 1399.6L18.8 17.0M1214.7 1308.6L41.6 15.8M1330.0 1227.7L64.2 14.6M1433.2 1155.2L86.4 13.4M1526.1 1089.9L108.3 12.2M1610.3 1030.8L129.9 11.0M1686.8 977.0L151.3 9.9M1756.7 927.9L172.3 8.8M1820.8 882.9L193.1 7.7M1879.9 841.4L213.6 6.6M1934.4 803.1L233.8 5.5M1984.9 767.6L253.8 4.4M2031.8 734.7L273.5 3.3M2075.4 704.0L292.9 2.3M2116.2 675.4L312.2 1.3M2154.4 648.6L331.1 0.3M2190.2 623.4L349.8 -0.7M2223.8 599.8L368.3 -1.7M2255.4 577.6L386.6 -2.7M2285.3 556.6L404.6 -3.7M2313.5 536.8L422.4 -4.6M2340.2 518.0L440.0 -5.6M2365.5 500.3L457.4 -6.5M2389.4 483.4L474.6 -7.4M2412.2 467.4L491.6 -8.3M2433.9 452.2L508.3 -9.2M2454.6 437.7L524.9 -10.1M2474.3 423.8L541.3 -11.0M2493.1 410.6L557.4 -11.9M2511.1 398.0L573.4 -12.7M2528.2 385.9L589.2 -13.6M2544.7 374.4L604.9 -14.4M2560.5 363.3L620.3 -15.2M2575.6 352.7L635.6 -16.1M2590.2 342.4L650.7 -16.9M2604.1 332.6L665.6 -17.7M2617.5 323.2L680.3 -18.5M2630.5 314.1L694.9 -19.2M2642.9 305.4L709.4 -20.0M2654.9 297.0L723.6 -20.8M2666.5 288.8L737.8 -21.5M2677.6 281.0L751.7 -22.3M2688.4 273.4L765.5 -23.0M2698.8 266.1L779.2 -23.8M2708.9 259.0L792.7 -24.5M2718.6 252.2L806.1 -25.2M2728.1 245.6L819.3 -25.9M2737.2 239.2L832.4 -26.6M2746.0 232.9L845.4 -27.3M2754.6 226.9L858.2 -28.0M2762.9 221.1L870.9 -28.7M2771.0 215.4L883.4 -29.4M2778.8 209.9L895.9 -30.0M2786.4 204.6L908.2 -30.7M2793.8 199.4L920.4 -31.3M2800.9 194.4L932.4 -32.0M2807.9 189.5L944.3 -32.6M2814.7 184.7L956.2 -33.3" stroke="#7e7e7e" stroke-width="1" fill="none" shape-rendering="crispEdges"/>
<polygon points="334.0,165.0 338.0,239.0 342.0,319.0 408.0,311.0 408.0,192.0" fill="#9c9c9c" filter="url(#fv)"/>
<polygon points="178.5,275.0 205.5,275.0 220.0,430.7 195.0,430.7" fill="#969696" filter="url(#fv)"/>
<polygon points="178.5,275.0 183.0,275.0 199.0,430.7 195.0,430.7" fill="#7e7e7e" />
<polygon points="221.5,332.0 243.0,332.0 255.2,507.8 239.8,507.8" fill="#8e8e8e" filter="url(#fv)"/>
<polygon points="221.5,332.0 226.0,332.0 243.5,507.8 239.8,507.8" fill="#777" />
<polygon points="411.8,427.0 432.0,427.0 432.0,469.9 411.8,469.9" fill="#8a8a8a" filter="url(#fv)"/>
<polygon points="411.8,427.0 417.0,427.0 417.0,469.9 411.8,469.9" fill="#747474" />
<polygon points="628.6,377.0 650.0,377.0 650.0,423.4 628.6,423.4" fill="#8a8a8a" filter="url(#fv)"/>
<polygon points="628.6,377.0 634.5,377.0 634.5,423.4 628.6,423.4" fill="#747474" />
<polygon points="292.0,434.0 300.5,437.0 314.5,640.0 306.1,635.0" fill="#757575" />
<polygon points="300.5,437.0 324.0,434.0 337.2,635.0 314.5,640.0" fill="url(#colF)" filter="url(#fv)"/>
<polygon points="342.3,240.1 415.0,303.4 389.0,307.0 342.3,261.2" fill="#7a7a7a" filter="url(#fh)"/>
<polyline points="342.3,250.0 400.0,303.0" fill="none" stroke="#8a8a8a" stroke-width="3" />
<polygon points="233.7,327.0 418.7,303.3 452.0,287.0 622.0,247.0 652.8,264.8 761.8,323.3 766.0,347.5 323.8,433.7 314.3,427.8" fill="#6f7373" filter="url(#fs)"/>
<polygon points="342.3,240.1 403.3,228.0 403.3,197.0 524.0,229.0 652.0,247.0 652.8,264.8 418.7,303.3" fill="#6f7373" filter="url(#fs)"/>
<polyline points="418.7,303.3 516.0,394.6" fill="none" stroke="#5f6363" stroke-width="2.2" />
<polyline points="418.7,303.3 648.7,265.0" fill="none" stroke="#646868" stroke-width="1.5" />
<polyline points="233.7,327.0 418.7,303.3" fill="none" stroke="#5f6363" stroke-width="1.5" />
<polygon points="342.8,240.0 349.0,240.0 418.7,303.3 409.2,299.3" fill="#666a6a" />
<polygon points="613.7,244.0 652.8,264.8 761.8,323.3 763.0,327.0 652.8,268.0 613.7,247.0" fill="#7e7e7e" />
<polygon points="178.0,271.2 341.6,238.9 341.6,242.5 181.0,274.6" fill="#6a6a6a" />
<polygon points="181.0,274.6 341.6,242.5 341.6,261.4 202.8,287.5 190.0,278.0" fill="url(#beamG)" filter="url(#fh)"/>
<polygon points="178.0,271.2 190.3,272.6 308.0,430.0 301.0,438.0 293.0,432.6" fill="#717171" filter="url(#fs)"/>
<polygon points="189.5,272.6 195.7,272.6 314.3,427.8 307.0,430.0" fill="#5c5e5e" />
<polygon points="301.0,438.0 323.8,433.7 766.0,347.5 762.6,370.0 325.0,458.7 301.0,441.0" fill="url(#beamG)" filter="url(#fh)"/>
<polyline points="323.8,434.2 766.0,348.0" fill="none" stroke="#6a6c6c" stroke-width="2" />
<polygon points="293.0,432.6 308.0,429.0 314.3,427.8 324.5,433.5 325.0,459.0 301.0,443.0 293.0,438.0" fill="#7c7c7c" />
<polygon points="293.0,432.6 308.0,429.5 314.3,427.8 324.5,433.5 301.0,437.5" fill="#676969" />
<polygon points="405.7,207.0 427.0,207.0 427.0,301.7 405.7,299.0" fill="#8c8c8c" filter="url(#fv)"/>
<polygon points="405.7,207.0 411.0,207.0 411.0,300.0 405.7,299.0" fill="#767676" />
<polygon points="637.3,227.0 660.2,227.0 660.2,264.8 637.3,263.0" fill="#8a8a8a" filter="url(#fv)"/>
<polygon points="637.3,227.0 644.0,227.0 644.0,264.0 637.3,263.0" fill="#747474" />
<polygon points="544.4,227.0 782.8,195.0 779.2,219.9 544.4,253.0" fill="url(#beamG)" filter="url(#fh)"/>
<polygon points="511.0,247.0 521.6,233.0 519.9,591.0 508.0,579.0" fill="#6f6f6f" />
<polygon points="520.6,226.0 544.4,226.0 541.8,585.8 518.9,591.0" fill="url(#colF)" filter="url(#fv)"/>
<polygon points="774.0,193.0 782.5,193.0 748.4,525.0 740.3,520.0" fill="#777777" />
<polygon points="781.5,191.0 814.8,187.5 778.5,517.0 747.4,525.0" fill="url(#colF)" filter="url(#fv)"/>
<polygon points="277.0,121.0 433.0,234.0 431.5,241.5 275.3,128.6" fill="#696d6d" />
<polygon points="431.0,234.0 511.0,245.0 511.0,250.0 431.5,241.5" fill="#6a6e6e" />
<polygon points="521.0,224.0 814.0,186.0 814.8,191.0 521.0,230.0" fill="#626666" />
<polygon points="275.6,122.0 535.0,85.2 814.8,187.5 521.0,226.0 520.0,233.0 511.0,247.0 431.0,236.0" fill="#6c7070" filter="url(#fs)"/>
<polyline points="338.9,114.5 522.7,226.6" fill="none" stroke="#5f6363" stroke-width="2" />
<polyline points="341.5,114.2 525.0,226.2" fill="none" stroke="#7a7e7e" stroke-width="0.8" />
<polyline points="361.7,126.8 589.2,104.6" fill="none" stroke="#646868" stroke-width="1.4" />
<polyline points="424.8,160.0 659.0,133.5" fill="none" stroke="#646868" stroke-width="1.4" />
<polyline points="275.6,122.0 535.0,85.2 814.8,187.5" fill="none" stroke="#626666" stroke-width="1.2" />
<polyline points="183.9,670.6 222.0,660.7" fill="none" stroke="#f00" stroke-width="1.1" shape-rendering="crispEdges"/>
<polygon points="220.3,657.3 236.0,657.3 222.5,665.0" fill="#f00" />
<text x="245.0" y="664.2" font-family="Liberation Sans,sans-serif" font-size="9.5" font-weight="bold" fill="#e8141c">X</text>
<polyline points="183.9,670.6 175.5,642.0" fill="none" stroke="#0a7a0a" stroke-width="1.1" />
<polygon points="173.1,642.0 179.0,645.6 179.4,651.5 174.0,652.4" fill="#0a7a0a" />
<polyline points="175.0,640.0 177.0,642.5 180.5,640.0" fill="none" stroke="#0a7a0a" stroke-width="1" />
<polyline points="183.9,670.6 179.5,633.0" fill="none" stroke="#00f" stroke-width="1.2" />
<polygon points="177.2,633.0 179.0,628.3 183.0,641.6 177.4,642.0" fill="#00f" />
<text x="180.2" y="631.0" font-family="Liberation Sans,sans-serif" font-size="9.5" font-weight="bold" fill="#1414f0">Z</text>
</g></svg></div><div class="abs" style="left:1295px;top:93px;width:312px;height:776px;border:1px solid #8496b2;border-radius:3px 3px 0 0;background:linear-gradient(180deg,#f0f0f0 0%,#ffffff 100%);box-shadow:inset 1px 1px 0 #fff"></div><div class="abs" style="left:1607px;top:93px;width:78px;height:776px;border:1px solid #8496b2;border-radius:3px 3px 0 0;background:linear-gradient(180deg,#f0f0f0 0%,#ffffff 100%);box-shadow:inset 1px 1px 0 #fff"></div><div class="t rt" style="left:1344.4px;top:117.5px;letter-spacing:0.167px;">Basic Display Settings</div><div class="sel" style="left:1313px;top:170px;width:262px"></div><div class="t lbl" style="left:1317.3px;top:176.7px;letter-spacing:-0.030px;">Perspective</div><div class="sel" style="left:1313px;top:213px;width:262px"></div><div class="t lbl" style="left:1317.3px;top:219.7px;letter-spacing:-0.001px;">Shaded</div><svg class="abs" style="left:1561px;top:180px" width="10" height="6" viewBox="0 0 10 6"><path d="M1 1l4 4 4-4" stroke="#444" stroke-width="1.100" fill="none"/></svg><svg class="abs" style="left:1561px;top:223px" width="10" height="6" viewBox="0 0 10 6"><path d="M1 1l4 4 4-4" stroke="#444" stroke-width="1.100" fill="none"/></svg><div class="cb" style="left:1302px;top:263px"></div><div class="t lbl" style="left:1326.0px;top:262.5px;letter-spacing:0.348px;">Show Member Names</div><div class="cb" style="left:1301px;top:288px"></div><div class="t lbl" style="left:1326.0px;top:287.5px;letter-spacing:0.037px;">Show FE model</div><div class="cb" style="left:1302px;top:313px"></div><svg class="abs" style="left:1302px;top:313px" width="13" height="13" viewBox="0 0 13 13"><path d="M2.500 6.500l3 3 5.500-6" stroke="#222" stroke-width="1.200" fill="none"/></svg><div class="t lbl" style="left:1326.0px;top:312.5px;letter-spacing:0.119px;">Show Foundations</div><div class="cb" style="left:1303px;top:338px"></div><div class="t lbl" style="left:1326.0px;top:337.5px;letter-spacing:0.302px;">Show Center of Mass per Floor</div><div class="cb" style="left:1303px;top:363px"></div><div class="t lbl" style="left:1326.0px;top:362.5px;letter-spacing:0.232px;">Show Center of Stiffness per Floor</div><div class="t lbl" style="left:1302.7px;top:387px;letter-spacing:0.162px;">Show Lateral Load Pattern</div><div class="sel" style="left:1303px;top:407px;width:260px;background:#cccccc;border-color:#bcbcbc"></div><div class="t lbl" style="left:1307.6px;top:413.5px;letter-spacing:0.403px;color:#6d6d6d">None</div><svg class="abs" style="left:1549px;top:417px" width="10" height="6" viewBox="0 0 10 6"><path d="M1 1l4 4 4-4" stroke="#a0a0a0" stroke-width="1.100" fill="none"/></svg><div class="cb" style="left:1302px;top:445px"></div><svg class="abs" style="left:1302px;top:445px" width="13" height="13" viewBox="0 0 13 13"><path d="M2.500 6.500l3 3 5.500-6" stroke="#222" stroke-width="1.200" fill="none"/></svg><div class="t lbl" style="left:1327.0px;top:444.5px;letter-spacing:0.119px;">Show Global Axes</div><div class="cb" style="left:1302px;top:470px"></div><svg class="abs" style="left:1302px;top:470px" width="13" height="13" viewBox="0 0 13 13"><path d="M2.500 6.500l3 3 5.500-6" stroke="#222" stroke-width="1.200" fill="none"/></svg><div class="t lbl" style="left:1324.3px;top:469.5px;letter-spacing:0.122px;">Show Grid</div><div class="cb" style="left:1302px;top:495px"></div><div class="t lbl" style="left:1324.3px;top:494.5px;letter-spacing:0.331px;">Show Members' Axes (Building Modeller</div><div class="t lbl" style="left:1324.3px;top:511.5px;letter-spacing:0.577px;">only)</div><div class="cb" style="left:1302px;top:540px"></div><div class="t lbl" style="left:1324.3px;top:539.5px;letter-spacing:0.446px;">Show Undeformed Model</div><div class="t lbl" style="left:1324.3px;top:556.5px;letter-spacing:0.259px;">(Post-processor only)</div><div class="cb" style="left:1303px;top:581px"></div><div class="t lbl" style="left:1319.0px;top:580.5px;letter-spacing:0.209px;">Quad View</div><div class="t lbl" style="left:1302.7px;top:611.5px;letter-spacing:-0.167px;">Text Size</div><div class="abs" style="left:1310px;top:637px;width:182px;height:14px;background:#e7eaea;border:1px solid #d6d6d6"></div><svg class="abs" style="left:1347px;top:637px" width="11" height="16" viewBox="0 0 11 16"><path d="M1 0h9v11l-4.500 4.500L1 11z" fill="#0a74d6"/></svg><div class="abs" style="left:1314px;top:656px;width:1px;height:4px;background:#aaa"></div><div class="abs" style="left:1410px;top:656px;width:1px;height:4px;background:#aaa"></div><div class="abs" style="left:1487px;top:656px;width:1px;height:4px;background:#aaa"></div><svg class="abs" style="left:1630px;top:120px" width="34" height="34" viewBox="0 0 34 34"><path d="M9 3l7 18H2z" fill="#e8301c" stroke="#901808" stroke-width="0.6"/><path d="M9 3l2 18H2z" fill="#ff7a3c"/><path d="M6 24c4 8 12 8 16 3l3 3 1-10-10 1 3 3c-3 3-7 2-9-1z" fill="#3cc83c" stroke="#187818" stroke-width="0.600"/><path d="M17 19l9-3 7 3v10l-8 4-8-4z" fill="#2a6ce0" stroke="#0a2f86" stroke-width="0.700"/><path d="M17 19l8 3 8-3-7-3z" fill="#7eb4ff"/><path d="M25 22v11l8-4v-10z" fill="#1448b0"/></svg><div class="abs" style="left:1616px;top:170px;width:64px;height:47px;border:1px solid #a9c0e4;border-radius:2px;background:rgba(255,255,255,0.25)"></div><svg class="abs" style="left:1634px;top:178px" width="27" height="32" viewBox="0 0 27 32"><rect x="1" y="2" width="25" height="29" rx="3" fill="#2a8ce8" stroke="#0a4fa8"/><rect x="4" y="5" width="19" height="23" fill="#eef0f4"/><rect x="8" y="0" width="11" height="5" rx="1.500" fill="#c8ccd4" stroke="#7a8290" stroke-width="0.600"/><rect x="7" y="9" width="8" height="7" fill="#fff" stroke="#888" stroke-width="0.700"/><rect x="7" y="19" width="8" height="7" fill="#fff" stroke="#888" stroke-width="0.700"/><path d="M8 11l3 4 8-10M8 21l3 4 8-10" stroke="#e0201c" stroke-width="2.200" fill="none"/></svg><div class="abs" style="left:1623px;top:229px;width:46px;height:42px;background:rgba(0,0,0,0.025)"></div><svg class="abs" style="left:1629px;top:233px" width="34" height="32" viewBox="0 0 34 32"><path d="M1 20l16-7 16 7v4l-16 7-16-7z" fill="#9a9a9a" stroke="#5a5a5a" stroke-width="0.600"/><path d="M1 15l16-7 16 7v4l-16 7-16-7z" fill="#8cc098" stroke="#4a7a58" stroke-width="0.600"/><path d="M1 9l16-7 16 7v5l-16 7-16-7z" fill="#1c58b8" stroke="#0a2f86" stroke-width="0.600"/><path d="M1 9l16-7 16 7-16 7z" fill="#4a94f0"/></svg><div class="abs" style="left:3px;top:869px;width:1683px;height:22px;background:#f0f0f0"></div><div class="abs" style="left:294px;top:868px;width:1001px;height:1px;background:#cfcfcf"></div><div class="ssep" style="left:1210px"></div><div class="ssep" style="left:1295px"></div><div class="ssep" style="left:1365px"></div><div class="ssep" style="left:1455px"></div><div class="ssep" style="left:1535px"></div><div class="t stat" style="left:1215.4px;top:874.5px;letter-spacing:0.083px;">Length: m</div><div class="t stat" style="left:1299.9px;top:874.5px;letter-spacing:0.084px;">Force: kN</div><div class="t stat" style="left:1370.4px;top:874.5px;letter-spacing:0.200px;">Mass: tonne</div><div class="t stat" style="left:1460.1px;top:874.5px;letter-spacing:-0.193px;">Stress: kPa</div><div class="t stat" style="left:1540.0px;top:874.5px;letter-spacing:0.183px;">Acceleration: m/sec2</div><svg class="abs" style="left:1672px;top:877px" width="12" height="12" viewBox="0 0 12 12"><rect x="9" y="1" width="2" height="2" fill="#b0b0b0"/><rect x="5" y="5" width="2" height="2" fill="#b0b0b0"/><rect x="9" y="5" width="2" height="2" fill="#b0b0b0"/><rect x="1" y="9" width="2" height="2" fill="#b0b0b0"/><rect x="5" y="9" width="2" height="2" fill="#b0b0b0"/><rect x="9" y="9" width="2" height="2" fill="#b0b0b0"/></svg></div></body></html>
